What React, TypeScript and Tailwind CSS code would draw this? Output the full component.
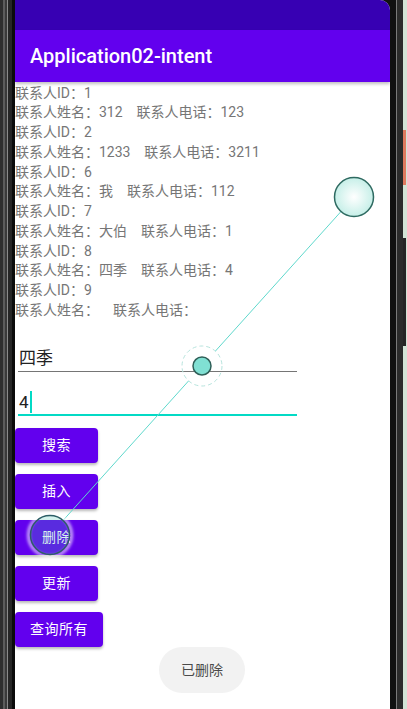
import React from "react";

const lines = [
  "联系人ID：1",
  "联系人姓名：312    联系人电话：123",
  "联系人ID：2",
  "联系人姓名：1233    联系人电话：3211",
  "联系人ID：6",
  "联系人姓名：我    联系人电话：112",
  "联系人ID：7",
  "联系人姓名：大伯    联系人电话：1",
  "联系人ID：8",
  "联系人姓名：四季    联系人电话：4",
  "联系人ID：9",
  "联系人姓名：    联系人电话：",
];

const buttons = [
  { label: "搜索", w: "w-[83px]" },
  { label: "插入", w: "w-[83px]" },
  { label: "删除", w: "w-[83px]" },
  { label: "更新", w: "w-[83px]" },
  { label: "查询所有", w: "w-[88px]" },
];

export default function App() {
  const font = { fontFamily: 'Roboto, "Noto Sans CJK SC", sans-serif' };
  return (
    <div
      className="relative flex h-[709px] w-[407px] overflow-hidden bg-[#111111]"
      style={font}
    >
      {/* left bezel */}
      <div className="flex h-full w-[15px] shrink-0">
        <div className="h-full w-[3px] bg-[#2e2e2e]" />
        <div className="h-full w-[2px] bg-[#5c5c5c]" />
        <div className="h-full w-[2px] bg-[#3a3a3a]" />
        <div className="h-full w-[1px] bg-[#8a8a8a]" />
        <div className="h-full w-[4px] bg-[#262626]" />
        <div className="h-full w-[3px] bg-[#0b0b0b]" />
      </div>

      {/* screen */}
      <div className="relative flex h-full w-[375px] shrink-0 flex-col overflow-hidden rounded-tr-[10px] bg-white">
        <div className="h-[30px] w-full shrink-0 bg-[#3700B3]" />
        <div className="relative z-10 flex h-[52px] w-full shrink-0 items-center bg-[#6200EE] pl-[15px] shadow-[0_2px_3px_rgba(0,0,0,0.25)]">
          <span className="text-[20px] font-medium leading-none text-white">
            Application02-intent
          </span>
        </div>

        <div className="flex flex-col pt-[1.6px] text-[14px] leading-[19.75px] text-[#767676]">
          {lines.map((l, i) => (
            <div key={i} className="whitespace-pre">
              {l}
            </div>
          ))}
        </div>

        <div className="ml-[3px] mt-[26.4px] w-[279px] border-b border-[#757575] pb-[2px] text-[17px] leading-[22px] text-[#222222]">
          <span className="pl-[1px]">四季</span>
        </div>

        <div className="ml-[3px] mt-[19px] flex w-[279px] items-center border-b-2 border-[#03DAC5] pb-[1px] text-[17px] leading-[22px] text-[#222222]">
          <span className="pl-[1px]">4</span>
          <span className="ml-[1px] inline-block h-[22px] w-[2px] bg-[#03DAC5]" />
        </div>

        <div className="mt-[12px] flex flex-col items-start gap-[11px]">
          {buttons.map((b) => (
            <div
              key={b.label}
              className={`flex h-[35px] ${b.w} items-center justify-center rounded-[4px] bg-[#6200EE] text-[14px] tracking-[0.5px] text-white shadow-[0_2px_3px_rgba(0,0,0,0.28)]`}
            >
              {b.label}
            </div>
          ))}
        </div>

        {/* toast */}
        <div className="absolute left-[144px] top-[647px] flex h-[46px] w-[86px] items-center justify-center rounded-full bg-[#F2F2F2] text-[14px] text-[#4a4a4a]">
          已删除
        </div>
      </div>

      {/* right bezel */}
      <div className="flex h-full w-[17px] shrink-0">
        <div className="h-full w-[6px] bg-[#101010]" />
        <div className="h-full w-[1px] bg-[#7a7a7a]" />
        <div className="h-full w-[6px] bg-[#2b2b2b]" />
        <div className="relative h-full w-[4px] bg-[#d3e4d6]">
          <div className="absolute left-0 top-[130px] h-[55px] w-[3px] bg-[#e07a5f]" />
          <div className="absolute left-0 top-[238px] h-[108px] w-[3px] bg-[#252525]" />
        </div>
      </div>

      {/* touch indicators overlay */}
      <svg
        className="pointer-events-none absolute left-0 top-0"
        width="407"
        height="709"
        viewBox="0 0 407 709"
      >
        <defs>
          <radialGradient id="g1" cx="50%" cy="50%" r="50%">
            <stop offset="0%" stopColor="#ffffff" />
            <stop offset="100%" stopColor="#c6efe8" />
          </radialGradient>
          <filter id="blur" x="-50%" y="-50%" width="200%" height="200%">
            <feGaussianBlur stdDeviation="1.6" />
          </filter>
        </defs>
        <line x1="341" y1="211.5" x2="215.4" y2="351.1" stroke="#5fd8cc" strokeWidth="1" />
        <line x1="188.6" y1="380.9" x2="63" y2="520.5" stroke="#5fd8cc" strokeWidth="1" />
        <circle cx="354" cy="197" r="19.5" fill="url(#g1)" stroke="#2e6a61" strokeWidth="1.5" />
        <circle cx="202" cy="366" r="20" fill="none" stroke="#b7e4dd" strokeWidth="1" strokeDasharray="4 3" />
        <circle cx="202" cy="366" r="9" fill="#80e0d3" stroke="#2f5f58" strokeWidth="1.5" />
        <circle cx="50" cy="535" r="21.5" fill="none" stroke="#ffffff" strokeOpacity="0.7" strokeWidth="3" filter="url(#blur)" />
        <circle cx="50" cy="535" r="19.5" fill="#3ac6ac" fillOpacity="0.22" stroke="#2d5e66" strokeWidth="1.5" />
      </svg>
    </div>
  );
}
